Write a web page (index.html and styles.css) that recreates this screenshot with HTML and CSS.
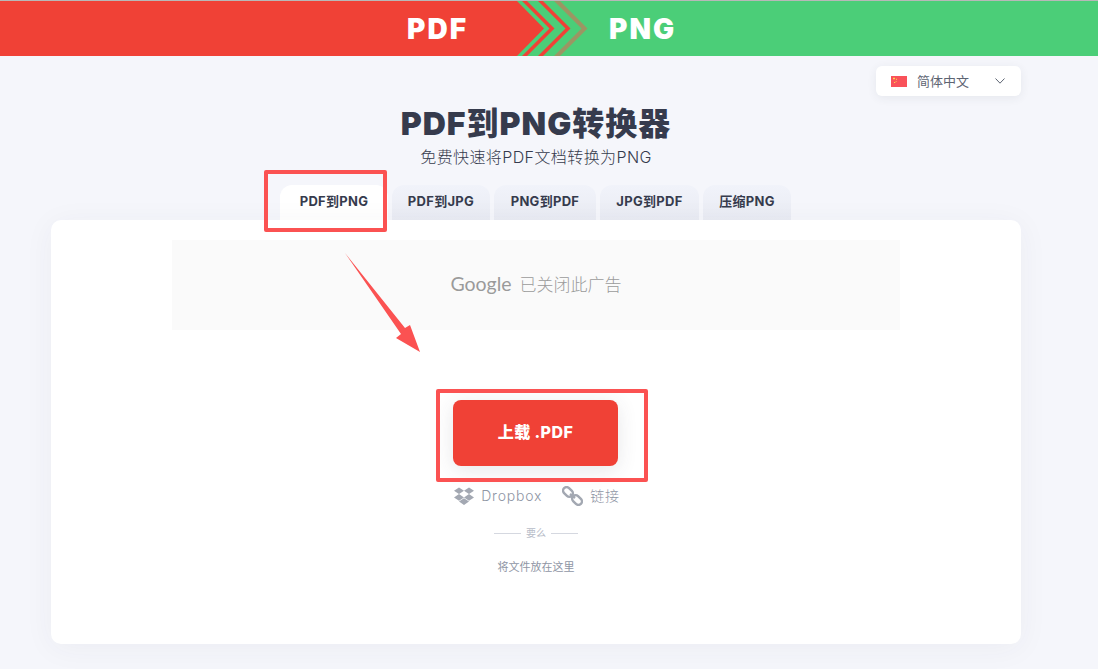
FILE: index.html
```html
<!DOCTYPE html>
<html lang="zh-CN">
<head>
  <meta charset="UTF-8" />
  <title>PDF到PNG转换器</title>
  <link rel="stylesheet" href="styles.css">
</head>
<body>

  <header class="banner">
    <div class="banner-side banner-red"><span>PDF</span></div>
    <div class="banner-side banner-green"><span>PNG</span></div>
    <svg class="banner-arrows" width="100" height="55" viewBox="0 0 100 55">
      <polygon points="0,0 27,27.5 0,55" fill="#f04136"/>
      <polygon points="5,0 10,0 37.500,27.500 10,55 5,55 32.500,27.500" fill="#f04136"/>
      <polygon points="21,0 26,0 53.500,27.500 26,55 21,55 48.500,27.500" fill="#f04136"/>
      <polygon points="37,0 43,0 70.500,27.500 43,55 37,55 64.500,27.500" fill="#9c9563"/>
    </svg>
  </header>

  <main class="page">
    <div class="lang-row">
      <div class="lang-select">
        <svg class="flag" width="16" height="11" viewBox="0 0 16 11">
          <rect width="16" height="11" fill="#f9525a"/>
          <path d="M2 2.500h2M3 1.500v2M5 3l1 .5M5.500 5.500l-1 .5M3 6l1 1" stroke="#ffd84a" stroke-width="1" fill="none"/>
        </svg>
        <span class="lang-name">简体中文</span>
        <svg class="caret" width="10" height="6" viewBox="0 0 10 6">
          <path d="M.5.500 5 5.200 9.500.500" fill="none" stroke="#5d6472" stroke-width="1"/>
        </svg>
      </div>
    </div>

    <h1 class="title">PDF到PNG转换器</h1>
    <p class="subtitle">免费快速将PDF文档转换为PNG</p>

    <ul class="tabs">
      <li class="tab tab-active">PDF到PNG</li>
      <li class="tab">PDF到JPG</li>
      <li class="tab">PNG到PDF</li>
      <li class="tab">JPG到PDF</li>
      <li class="tab">压缩PNG</li>
    </ul>

    <section class="card">
      <div class="ad">
        <span class="ad-google">Google</span>
        <span class="ad-text">已关闭此广告</span>
      </div>

      <button class="upload-btn">上载 .PDF</button>

      <div class="sources">
        <span class="source">
          <svg width="20" height="19" viewBox="0 0 20 19">
            <path fill="#a3a8b2" d="M5 .5 0 3.800l5 3.300 5-3.300zM15 .500l-5 3.300 5 3.300 5-3.300zM0 10.400l5 3.300 5-3.300-5-3.300zM15 7.100l-5 3.300 5 3.300 5-3.300zM5 14.500l5 3.500 5-3.500-5-3.300z"/>
          </svg>
          Dropbox
        </span>
        <span class="source">
          <svg width="21" height="20" viewBox="0 0 21 20">
            <g fill="none" stroke="#a3a8b2" stroke-width="2.400">
              <rect x="0.500" y="2.500" width="11" height="7" rx="3.500" transform="rotate(45 6 6)"/>
              <rect x="9.500" y="10.500" width="11" height="7" rx="3.500" transform="rotate(45 15 14)"/>
              <path d="M8 8l5 4"/>
            </g>
          </svg>
          链接
        </span>
      </div>

      <div class="or-line"><span>要么</span></div>
      <p class="drop-text">将文件放在这里</p>
    </section>
  </main>

  <!-- markup drawn on top of the screenshot -->
  <div class="mark mark-tab"></div>
  <div class="mark mark-btn"></div>
  <svg class="mark-arrow" width="80" height="104" viewBox="0 0 80 104">
    <polygon points="0,0 60,75 65,72 75,99 51,85 56,81" fill="#fb5252"/>
  </svg>

</body>
</html>
```

FILE: styles.css
```css
* {margin:0; padding:0; box-sizing:border-box;}
body {
  font-family: Inter, "Noto Sans CJK SC", sans-serif;
  background: #f5f6fb;
  color: #363b4d;
  height: 669px;
  overflow: hidden;
  border-top: 1px solid #b8b8b8;
}

.banner {
  display: flex;
  height: 55px;
  position: relative;
  background: #4bce78;
}
.banner-side {
  display: flex;
  align-items: center;
  color: #fff;
  font-weight: 900;
  font-size: 28px;
  letter-spacing: 2px;
}
.banner-red {
  width: 517px;
  background: #f04136;
  justify-content: flex-end;
  padding-right: 49px;
}
.banner-green {
  flex: 1;
  padding-left: 92px;
}
.banner-arrows {
  position: absolute;
  left: 517px;
  top: 0;
}

.page {
  width: 970px;
  margin-left: 51px;
  display: flex;
  flex-direction: column;
  align-items: center;
}

.lang-row {
  align-self: flex-end;
  padding-top: 10px;
}
.lang-select {
  width: 145px;
  height: 30px;
  background: #fff;
  border-radius: 6px;
  box-shadow: 0 2px 10px rgba(54,59,77,0.08);
  display: flex;
  align-items: center;
  padding: 0 16px 0 15px;
  font-size: 13px;
  color: #5d6472;
}
.flag {margin-right: 10px;}
.lang-name {flex: 1; padding-bottom: 2px;}

.title {
  font-size: 32px;
  font-weight: 900;
  line-height: 40px;
  margin-top: 8px;
  letter-spacing: 1px;
}
.subtitle {
  font-size: 16px;
  font-weight: 300;
  line-height: 20px;
  margin-top: 3px;
  letter-spacing: .4px;
}

.tabs {
  list-style: none;
  display: grid;
  grid-template-columns: 108px 98px 102px 99px 88px;
  gap: 4px;
  margin-top: 18px;
  align-self: flex-start;
  padding-left: 229px;
}
.tab {
  height: 35px;
  font-size: 13px;
  font-weight: 700;
  letter-spacing: .3px;
  line-height: 33px;
  text-align: center;
  border-radius: 12px 12px 0 0;
  background: linear-gradient(#f1f3fa, #e9ebf3);
  white-space: nowrap;
}
.tab-active {background: #fff;}

.card {
  width: 970px;
  height: 424px;
  background: #fff;
  border-radius: 10px;
  box-shadow: 0 4px 30px rgba(54,59,77,0.05);
  padding-top: 20px;
  display: flex;
  flex-direction: column;
  align-items: center;
}

.ad {
  width: 728px;
  height: 90px;
  background: #fafafa;
  display: flex;
  align-items: center;
  justify-content: center;
  gap: 8px;
  color: #9a9a9a;
  margin-bottom: 70px;
  padding-bottom: 4px;
}
.ad-google {font-family: Lato, sans-serif; font-size: 19.500px;}
.ad-text {font-size: 17px; font-weight: 300;}

.upload-btn {
  width: 165px;
  height: 66px;
  border: none;
  border-radius: 8px;
  background: #f04136;
  color: #fff;
  font-family: inherit;
  font-size: 16px;
  font-weight: 800;
  letter-spacing: .4px;
  padding-bottom: 4px;
  margin-right: 1px;
  box-shadow: 0 4px 20px rgba(54,59,77,0.12);
}

.sources {
  display: flex;
  gap: 20px;
  margin-top: 20px;
  padding-left: 2px;
  font-size: 14px;
  font-weight: 300;
  letter-spacing: .8px;
  color: #8f96a5;
  line-height: 20px;
}
.source {display: flex; align-items: center; gap: 7px;}

.or-line {
  display: flex;
  align-items: center;
  gap: 5px;
  margin-top: 17px;
  font-size: 10px;
  color: #b7bcc8;
  line-height: 20px;
}
.or-line::before, .or-line::after {
  content: "";
  width: 27px;
  height: 1px;
  background: #d5d8e0;
}
.drop-text {
  font-size: 11px;
  color: #8f96a5;
  margin-top: 15px;
}

.mark {
  position: absolute;
  border: 4px solid #fb5252;
  border-radius: 2px;
}
.mark-tab {left: 264px; top: 170px; width: 123px; height: 62px;}
.mark-btn {left: 436px; top: 389px; width: 212px; height: 93px;}
.mark-arrow {position: absolute; left: 345px; top: 253px;}
```
